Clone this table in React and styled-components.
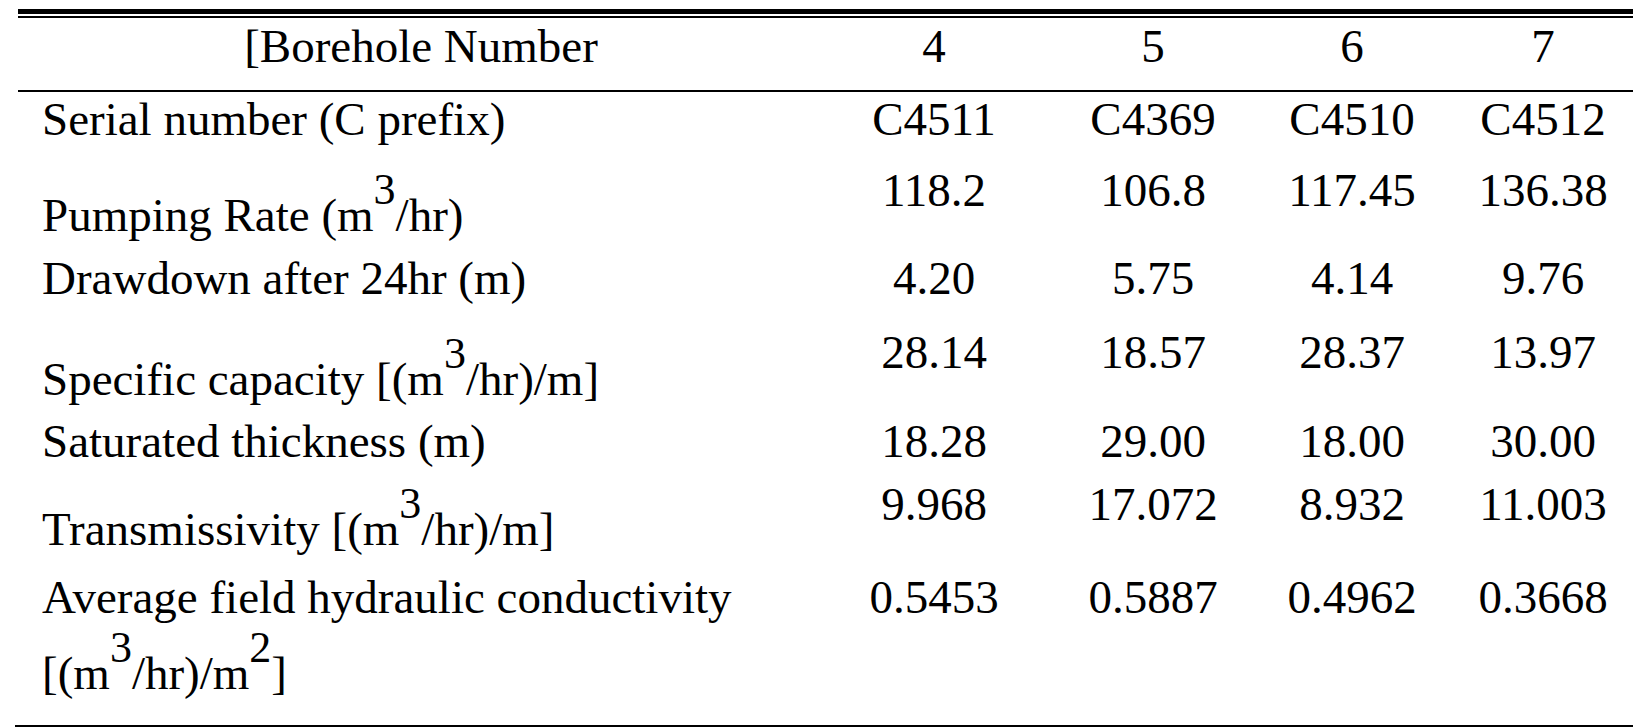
import React from "react";
import styled, { createGlobalStyle } from "styled-components";

const GlobalStyle = createGlobalStyle`
  html, body {
    margin: 0;
    padding: 0;
    background: #ffffff;
    overflow: hidden;
  }
`;

const COLUMNS = "806px 220px 218px 180px 191px";

const rows = [
  {
    label: "Serial number (C prefix)",
    values: ["C4511", "C4369", "C4510", "C4512"],
    pad: 3,
    lift: 0,
  },
  {
    label: (
      <>
        Pumping Rate (m<Sup>3</Sup>/hr)
      </>
    ),
    values: ["118.2", "106.8", "117.45", "136.38"],
    pad: 23,
    lift: 24,
  },
  {
    label: "Drawdown after 24hr (m)",
    values: ["4.20", "5.75", "4.14", "9.76"],
    pad: 15,
    lift: 0,
  },
  {
    label: (
      <>
        Specific capacity [(m<Sup>3</Sup>/hr)/m]
      </>
    ),
    values: ["28.14", "18.57", "28.37", "13.97"],
    pad: 26,
    lift: 26,
  },
  {
    label: "Saturated thickness (m)",
    values: ["18.28", "29.00", "18.00", "30.00"],
    pad: 14,
    lift: 0,
  },
  {
    label: (
      <>
        Transmissivity [(m<Sup>3</Sup>/hr)/m]
      </>
    ),
    values: ["9.968", "17.072", "8.932", "11.003"],
    pad: 15,
    lift: 24,
  },
];

const App = () => {
  return (
    <>
      <GlobalStyle />
      <Page>
        <Table>
          <HeaderRow>
            <HeadLabel>[Borehole Number</HeadLabel>
            {["4", "5", "6", "7"].map((n, i) => (
              <Value key={n} $last={i === 3}>
                {n}
              </Value>
            ))}
          </HeaderRow>
          <Body>
            {rows.map((row, r) => (
              <Row key={r} $pad={row.pad}>
                <Label $lift={row.lift}>{row.label}</Label>
                {row.values.map((v, i) => (
                  <Value key={i} $last={i === 3}>
                    {v}
                  </Value>
                ))}
              </Row>
            ))}
            <Row $pad={20}>
              <Label $lift={0}>
                <LabelLine>Average field hydraulic conductivity</LabelLine>
                <LabelLine $gap={27}>
                  [(m<Sup>3</Sup>/hr)/m<Sup>2</Sup>]
                </LabelLine>
              </Label>
              {["0.5453", "0.5887", "0.4962", "0.3668"].map((v, i) => (
                <Value key={i} $last={i === 3}>
                  {v}
                </Value>
              ))}
            </Row>
          </Body>
        </Table>
      </Page>
    </>
  );
};

export default App;

const Page = styled.div`
  padding-top: 9px;
  padding-left: 18px;
  font-family: "Liberation Serif", "Times New Roman", serif;
  font-size: 47px;
  line-height: 48px;
  color: #000000;
`;

const Table = styled.div`
  width: 1615px;
  border-top: 5px solid #000000;
`;

const HeaderRow = styled.div`
  display: grid;
  grid-template-columns: ${COLUMNS};
  align-items: start;
  margin-top: 2px;
  border-top: 2px solid #000000;
  border-bottom: 2px solid #000000;
  padding: 4px 0 20px 0;
`;

const HeadLabel = styled.div`
  text-align: center;
  white-space: nowrap;
`;

const Body = styled.div`
  margin-left: -3px;
  padding-left: 3px;
  padding-bottom: 28px;
  border-bottom: 3px solid #000000;
`;

const Row = styled.div`
  display: grid;
  grid-template-columns: ${COLUMNS};
  align-items: start;
  padding-top: ${(p) => p.$pad}px;
`;

const Label = styled.div`
  padding-left: 24px;
  padding-top: ${(p) => p.$lift}px;
  white-space: nowrap;
`;

const LabelLine = styled.div`
  margin-top: ${(p) => p.$gap || 0}px;
`;

const Value = styled.div`
  text-align: center;
  white-space: nowrap;
  padding-left: ${(p) => (p.$last ? 11 : 0)}px;
`;

function Sup({ children }) {
  return <SupText>{children}</SupText>;
}

const SupText = styled.span`
  font-size: 44px;
  line-height: 0;
  vertical-align: 27px;
`;
